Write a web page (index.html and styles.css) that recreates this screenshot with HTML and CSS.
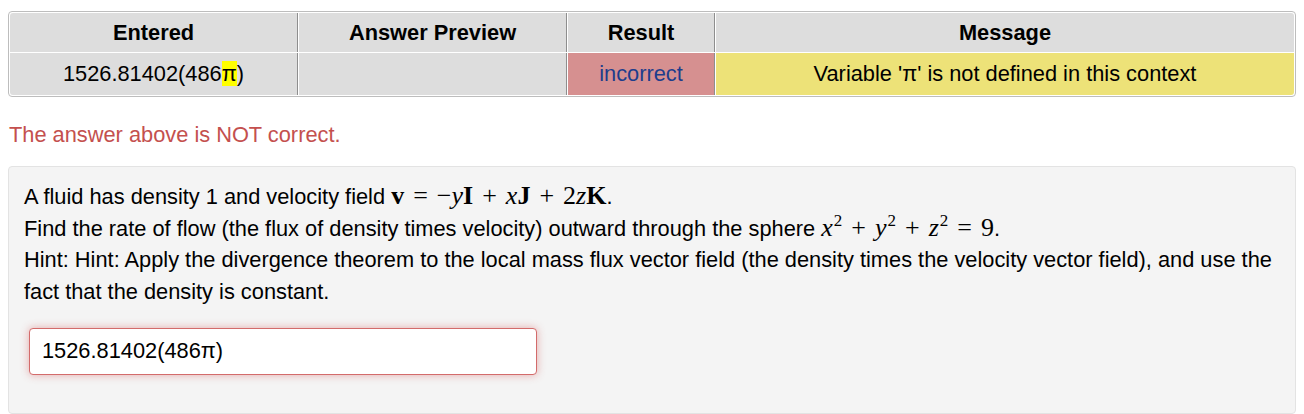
FILE: index.html
```html
<!DOCTYPE html>
<html>
<head>
<meta charset="utf-8">
<link rel="stylesheet" href="styles.css">
</head>
<body>
<table class="results">
  <thead>
    <tr>
      <th class="c-entered">Entered</th>
      <th class="c-preview">Answer Preview</th>
      <th class="c-result">Result</th>
      <th class="c-message">Message</th>
    </tr>
  </thead>
  <tbody>
    <tr>
      <td>1526.81402(486<span class="hl">π</span>)</td>
      <td></td>
      <td class="incorrect">incorrect</td>
      <td class="msg">Variable 'π' is not defined in this context</td>
    </tr>
  </tbody>
</table>

<div class="feedback">The answer above is NOT correct.</div>

<div class="problem">
  <div class="text">
    A fluid has density 1 and velocity field <span class="math"><b>v</b><span class="op">=</span>−<i>y</i><b>I</b><span class="op">+</span><i>x</i><b>J</b><span class="op">+</span>2<i>z</i><b>K</b></span>.<br>
    Find the rate of flow (the flux of density times velocity) outward through the sphere <span class="math"><i>x</i><sup>2</sup><span class="op">+</span><i>y</i><sup>2</sup><span class="op">+</span><i>z</i><sup>2</sup><span class="op">=</span>9</span>.<br>
    Hint: Hint: Apply the divergence theorem to the local mass flux vector field (the density times the velocity vector field), and use the fact that the density is constant.
  </div>
  <div class="answer">
    <input class="ans-input" type="text" value="1526.81402(486π)">
  </div>
</div>
</body>
</html>
```

FILE: styles.css
```css
body {
  margin: 8px;
  font-family: "Liberation Sans", Arial, sans-serif;
  font-size: 21.8px;
  color: #000;
  background: #fff;
}

.results {
  width: 100%;
  margin-top: 3px;
  border: 1px solid #bdbdbd;
  border-radius: 4px;
  border-spacing: 1px;
  background: #fff;
  font-size: 21.8px;
}

.results th,
.results td {
  background: #dddddd;
  text-align: center;
  padding: 0 8px;
  border-right: 1px solid #8e8e8e;
}

.results th:last-child,
.results td:last-child {
  border-right: none;
}

.results th {
  height: 39px;
  font-weight: bold;
}

.results td {
  height: 42px;
}

.results th:first-child { border-top-left-radius: 3px; }
.results th:last-child { border-top-right-radius: 3px; }
.results td:first-child { border-bottom-left-radius: 3px; }
.results td:last-child { border-bottom-right-radius: 3px; }

.c-entered { width: 271px; }
.c-preview { width: 251px; }
.c-result { width: 130px; }

.hl {
  background: #ffff00;
}

.results td.incorrect {
  background: #d69090;
  color: #1d3d8c;
}

.results td.msg {
  background: #ede278;
}

.feedback {
  margin-top: 26px;
  line-height: 24px;
  color: #c4504e;
  padding-left: 1px;
}

.problem {
  margin-top: 19px;
  background: #f4f4f4;
  border: 1px solid #e3e3e3;
  border-radius: 4px;
  padding: 14px 15px 38px 15px;
}

.text {
  line-height: 31.7px;
}

.math {
  font-family: "Liberation Serif", "Times New Roman", serif;
  font-size: 26px;
  line-height: 20px;
  white-space: nowrap;
}

.math b {
  font-weight: bold;
}

.math i {
  font-style: italic;
}

.math sup {
  font-size: 17px;
  vertical-align: 10px;
  line-height: 0;
  margin-left: 1px;
}

.op {
  margin: 0 9px;
}

.answer {
  margin-top: 20px;
  padding-left: 5px;
}

.ans-input {
  box-sizing: border-box;
  width: 508px;
  height: 47px;
  padding: 0 12px;
  font-family: "Liberation Sans", Arial, sans-serif;
  font-size: 21.8px;
  color: #000;
  background: #fff;
  border: 1px solid #d36b6b;
  border-radius: 4px;
  box-shadow: 0 0 8px rgba(210, 80, 80, 0.45);
  outline: none;
}
```
